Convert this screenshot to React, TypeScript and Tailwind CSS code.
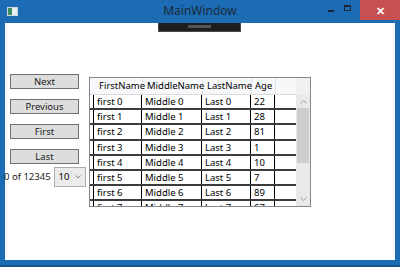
import React from 'react';

const rows = [
    { f: 'first 0', m: 'Middle 0', l: 'Last 0', a: '22', h: 'h-[15px]' },
    { f: 'first 1', m: 'Middle 1', l: 'Last 1', a: '28', h: 'h-[15px]' },
    { f: 'first 2', m: 'Middle 2', l: 'Last 2', a: '81', h: 'h-[16px]' },
    { f: 'first 3', m: 'Middle 3', l: 'Last 3', a: '1', h: 'h-[15px]' },
    { f: 'first 4', m: 'Middle 4', l: 'Last 4', a: '10', h: 'h-[15px]' },
    { f: 'first 5', m: 'Middle 5', l: 'Last 5', a: '7', h: 'h-[15px]' },
    { f: 'first 6', m: 'Middle 6', l: 'Last 6', a: '89', h: 'h-[15px]' },
    { f: 'first 7', m: 'Middle 7', l: 'Last 7', a: '67', h: 'h-[16px]' },
];

const font = { fontFamily: '"Noto Sans", "Open Sans", sans-serif' };

const NavButton = ({ label }: { label: string }) => (
    <div className="w-[69px] h-[15px] bg-[#dddddd] border border-[#707070] flex items-center justify-center text-[9.5px] leading-none text-[#1a1a1a]">
        {label}
    </div>
);

const App: React.FC = () => {
    return (
        <div className="w-[400px] h-[267px] bg-[#1b6cb4] flex flex-col overflow-hidden" style={font}>
            {/* Title bar */}
            <div className="h-[23px] flex items-start">
                <div className="w-[75px] flex">
                    <div className="ml-[7px] mt-[7px] w-[11px] h-[9px] bg-[#e8eef2] border border-[#c9d6de] flex">
                        <div className="w-[4px] h-full bg-[#3d8f5e]" />
                    </div>
                </div>
                <div className="flex-1 text-center text-[12px] leading-none mt-[5px] text-[#1d2a38]">MainWindow</div>
                <div className="w-[75px] flex">
                    {/* minimize */}
                    <div className="w-[12px] h-[20px] flex items-center justify-center">
                        <div className="w-[6px] h-[2px] bg-[#1a2633] mt-[2px]" />
                    </div>
                    {/* maximize */}
                    <div className="w-[21px] h-[20px] flex items-start justify-center pt-[5px]">
                        <div className="w-[7px] h-[6px] border border-[#1a2633] border-t-2" />
                    </div>
                    {/* close */}
                    <div className="w-[40px] h-[20px] ml-[2px] bg-[#c75050] flex items-center justify-center text-white text-[11px] font-bold leading-none">
                        ✕
                    </div>
                </div>
            </div>

            <div className="flex flex-1">
                <div className="w-[5px]" />
                {/* Client area */}
                <div className="w-[390px] h-[237px] bg-white relative flex items-start">
                    {/* debug toolbar overlay */}
                    <div className="absolute left-[153px] top-0 w-[83px] h-[9px] bg-[#1e1e1e] border border-[#4a4a4a] border-t-0 flex justify-center">
                        <div className="mt-[2px] w-[23px] h-[3px] bg-[#555555]" />
                    </div>

                    {/* Left column */}
                    <div className="w-[84px] pt-[51px] flex flex-col">
                        <div className="ml-[5px] flex flex-col gap-[10px]">
                            <NavButton label="Next" />
                            <NavButton label="Previous" />
                            <NavButton label="First" />
                            <NavButton label="Last" />
                        </div>
                        <div className="mt-[2px] flex items-center h-[21px]">
                            <span className="-ml-[1px] text-[9.5px] leading-none text-[#1a1a1a] whitespace-nowrap">0 of 12345</span>
                            <div className="ml-[3px] w-[32px] h-[20px] bg-[#ebebeb] border border-[#acacac] flex items-center pl-[4px] pr-[4px] justify-between">
                                <span className="text-[9.5px] leading-none text-black">10</span>
                                <svg width="6" height="4" viewBox="0 0 6 4">
                                    <path d="M0.5 0.5 L3 3 L5.5 0.5" stroke="#888" fill="none" strokeWidth="1" />
                                </svg>
                            </div>
                        </div>
                    </div>

                    {/* DataGrid */}
                    <div className="mt-[54px] w-[222px] h-[130px] border border-[#828790] flex overflow-hidden text-[9.5px] leading-none text-black">
                        <div className="flex flex-col w-[206px]">
                            {/* header */}
                            <div className="h-[17px] flex bg-[#f7f8fa] shrink-0 border-b border-[#d8dade]">
                                <div className="w-[4px]" />
                                <div className="w-[49px] border-r border-[#e2e4e8] pl-[5px] flex items-center whitespace-nowrap">FirstName</div>
                                <div className="w-[60px] border-r border-[#e2e4e8] pl-[4px] flex items-center whitespace-nowrap">MiddleName</div>
                                <div className="w-[49px] border-r border-[#e2e4e8] pl-[4px] flex items-center whitespace-nowrap">LastName</div>
                                <div className="w-[24px] border-r border-[#e2e4e8] pl-[3px] flex items-center">Age</div>
                                <div className="flex-1" />
                            </div>
                            {/* rows */}
                            <div className="flex flex-col">
                                {rows.map((r) => (
                                    <div key={r.f} className={`${r.h} shrink-0 flex border-b-2 border-[#3c3c3c]`}>
                                        <div className="w-[4px] border-r border-black" />
                                        <div className="w-[48px] border-r border-black pl-[3px] flex items-center">{r.f}</div>
                                        <div className="w-[60px] border-r border-black pl-[3px] flex items-center">{r.m}</div>
                                        <div className="w-[49px] border-r border-black pl-[3px] flex items-center">{r.l}</div>
                                        <div className="w-[24px] border-r border-black pl-[3px] flex items-center">{r.a}</div>
                                        <div className="flex-1" />
                                    </div>
                                ))}
                            </div>
                        </div>
                        {/* scrollbar */}
                        <div className="w-[14px] bg-[#e9e9e9] flex flex-col">
                            <div className="h-[17px] bg-[#f0f0f0]" />
                            <div className="h-[13px] flex items-center justify-center">
                                <svg width="7" height="4" viewBox="0 0 7 4">
                                    <path d="M0.5 3.5 L3.5 0.5 L6.5 3.5" stroke="#a0a0a0" fill="none" />
                                </svg>
                            </div>
                            <div className="mx-[1px] h-[55px] bg-[#cdcdcd]" />
                            <div className="flex-1" />
                            <div className="h-[14px] flex items-center justify-center">
                                <svg width="7" height="4" viewBox="0 0 7 4">
                                    <path d="M0.5 0.5 L3.5 3.5 L6.5 0.5" stroke="#a0a0a0" fill="none" />
                                </svg>
                            </div>
                        </div>
                    </div>
                </div>
                <div className="w-[5px]" />
            </div>
            <div className="h-[7px] flex flex-col">
                <div className="flex-1" />
                <div className="h-[2px] bg-[#14568f]" />
            </div>
        </div>
    );
};

export default App;
